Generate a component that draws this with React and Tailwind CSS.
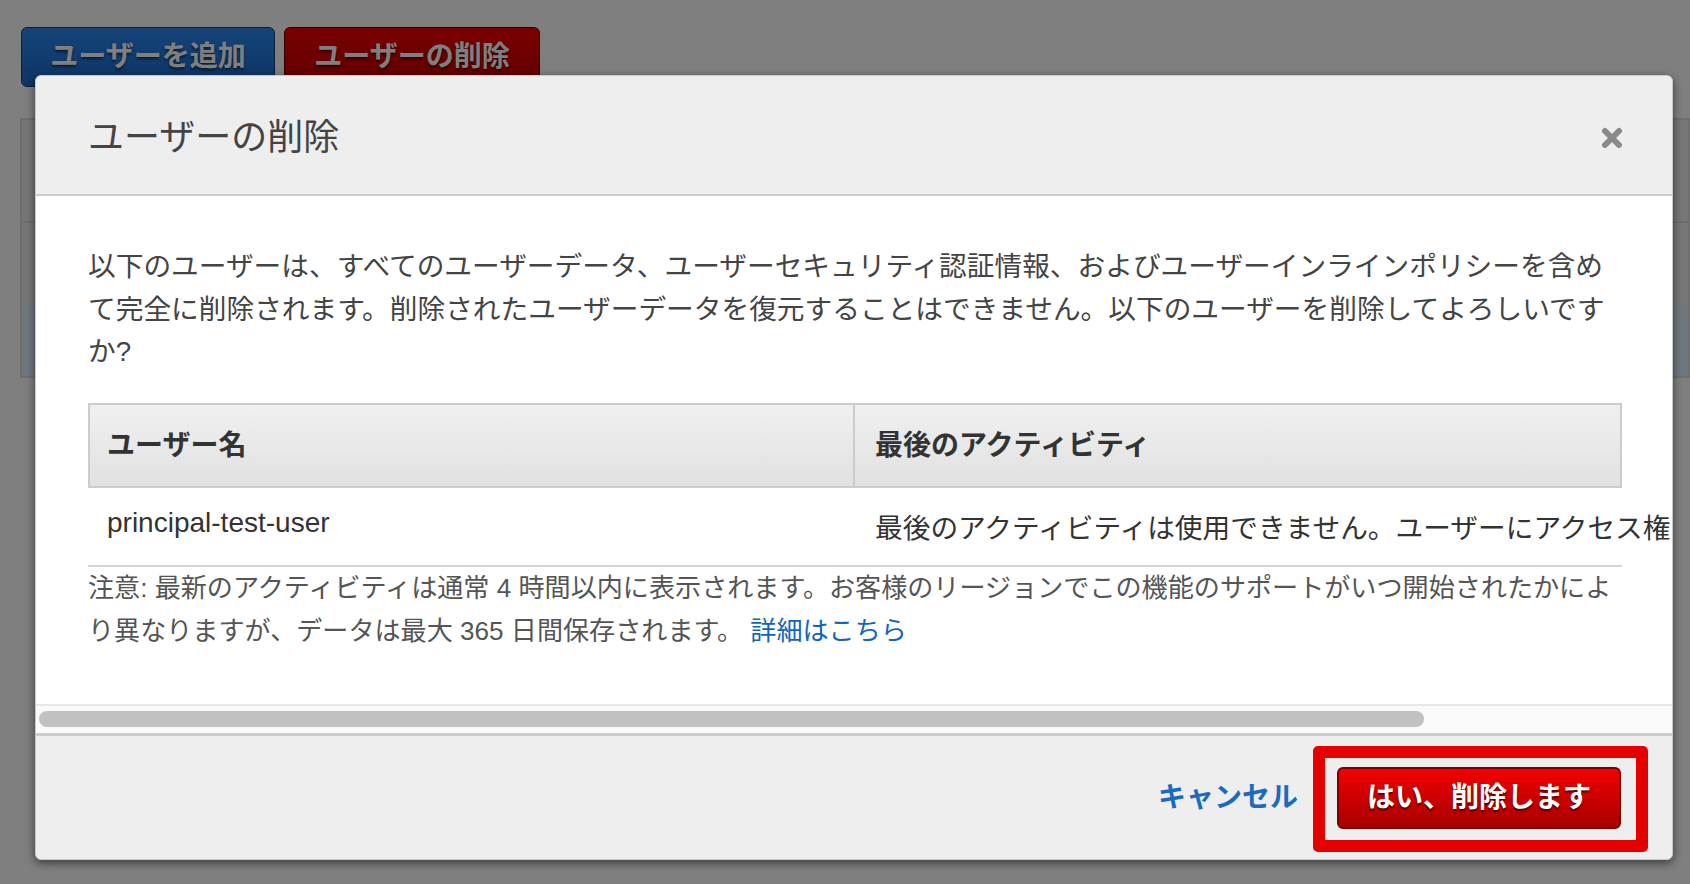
import React from "react";

const CloseIcon = () => (
  <svg width="22" height="22" viewBox="0 0 22 22" aria-hidden="true">
    <path d="M4 4 L18 18 M18 4 L4 18" stroke="#8a8a8a" strokeWidth="6" strokeLinecap="round" />
  </svg>
);

const App = () => {
  return (
    <div className="relative w-[1690px] h-[884px] overflow-hidden bg-white font-['Liberation_Sans','Noto_Sans_CJK_JP',sans-serif]">
      {/* page behind the dialog */}
      <div className="flex gap-[9px] pl-[21px] pt-[27px]">
        <button className="w-[254px] h-[60px] rounded-[6px] border border-[#10407a] bg-linear-to-b from-[#2a88f2] to-[#1c6aca] text-white text-[28px] font-bold [text-shadow:0_2px_3px_rgba(0,0,0,0.6)]">
          ユーザーを追加
        </button>
        <button className="w-[256px] h-[60px] rounded-[6px] border border-[#600000] bg-linear-to-b from-[#f40000] to-[#c00000] text-white text-[28px] font-bold [text-shadow:0_2px_3px_rgba(0,0,0,0.6)]">
          ユーザーの削除
        </button>
      </div>
      <div className="ml-[20px] mt-[31px] border-2 border-[#dcdcdc] bg-[#eeeeee]">
        <div className="h-[103px] border-b-2 border-[#dcdcdc]" />
        <div className="h-[82px] bg-[#eeeeee]" />
        <div className="h-[71px] bg-[#deeeff]" />
      </div>

      {/* overlay */}
      <div className="absolute inset-0 bg-black/50" />

      {/* dialog */}
      <div className="absolute left-[35px] top-[75px] w-[1638px] rounded-[6px] border border-[#c8c8c8] bg-[#eeeeee] shadow-[0_3px_10px_rgba(0,0,0,0.55)] overflow-hidden">
        <div className="h-[120px] flex items-center justify-between px-[52px] border-b-2 border-[#cccccc]">
          <h2 className="mt-[6px] text-[36px] text-[#444444] font-normal">ユーザーの削除</h2>
          <button className="mt-[6px] -mr-[3px] flex items-center justify-center">
            <CloseIcon />
          </button>
        </div>

        <div className="h-[508px] bg-white overflow-hidden pt-[50px] px-[52px]">
          <p className="text-[27.7px] leading-[42.5px] text-[#444444]">
            以下のユーザーは、すべてのユーザーデータ、ユーザーセキュリティ認証情報、およびユーザーインラインポリシーを含めて完全に削除されます。削除されたユーザーデータを復元することはできません。以下のユーザーを削除してよろしいですか?
          </p>

          <div className="mt-[29px] w-[1534px]">
            <div className="flex h-[85px] border-2 border-[#cccccc] bg-linear-to-b from-[#f0f0f0] to-[#e1e1e1] text-[28px] font-bold text-[#333333]">
              <div className="w-[765px] flex items-center pl-[17px] pt-[2px] border-r-2 border-[#cccccc]">ユーザー名</div>
              <div className="flex-1 flex items-center pl-[20px] pt-[2px]">最後のアクティビティ</div>
            </div>
            <div className="flex h-[79px] border-b-2 border-[#d4d4d4] text-[28px] text-[#333333]">
              <div className="w-[767px] shrink-0 flex items-center pl-[19px] pb-[6px]">principal-test-user</div>
              <div className="flex items-center pl-[20px] pt-[6px] whitespace-nowrap text-[27.7px]">
                最後のアクティビティは使用できません。ユーザーにアクセス権限がないか、まだ使用されていません。
              </div>
            </div>
            <p className="text-[26.1px] leading-[43px] text-[#555555]">
              注意: 最新のアクティビティは通常 4 時間以内に表示されます。お客様のリージョンでこの機能のサポートがいつ開始されたかにより異なりますが、データは最大 365 日間保存されます。{" "}
              <a className="text-[#1166bb]">詳細はこちら</a>
            </p>
          </div>
        </div>

        <div className="h-[29px] bg-[#fafafa] border-t-2 border-[#e8e8e8] pt-[5px] pl-[3px]">
          <div className="w-[1385px] h-[16px] rounded-full bg-[#c1c1c1]" />
        </div>

        <div className="h-[126px] border-t-[3px] border-[#cccccc] flex items-center justify-end gap-[39px] px-[51px]">
          <a className="text-[28px] font-bold text-[#1a6bbf]">キャンセル</a>
          <div className="relative">
            <button className="w-[284px] h-[62px] rounded-[6px] border-2 border-[#780000] bg-linear-to-b from-[#f20000] to-[#a80000] text-white text-[28px] font-bold [text-shadow:0_2px_2px_rgba(0,0,0,0.6)]">
              はい、削除します
            </button>
            <div className="absolute -left-[24px] -right-[27px] -top-[21px] -bottom-[23px] border-[12px] border-[#e50000] rounded-[5px] pointer-events-none" />
          </div>
        </div>
      </div>
    </div>
  );
};

export default App;
